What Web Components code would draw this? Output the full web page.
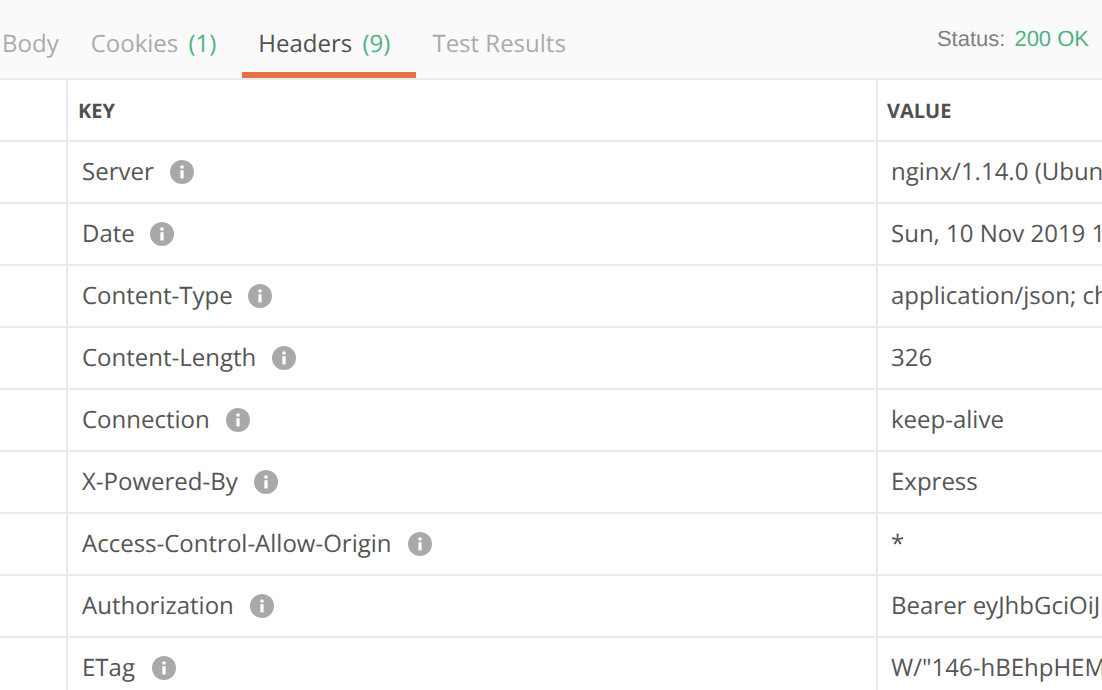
<!DOCTYPE html>
<html>
<head>
<meta charset="utf-8">
<style>
  html, body { margin: 0; padding: 0; height: 100%; overflow: hidden; background: #fff; }
  body { font-family: 'Open Sans', sans-serif; color: #505050; text-rendering: geometricPrecision; }
</style>
</head>
<body>
<response-pane>
  <response-tab slot="tabs" style="--pad-left:2px;--pad-right:15px">Body</response-tab>
  <response-tab slot="tabs" count="1" style="--pad-left:17px;--pad-right:17px;margin-right:9px">Cookies</response-tab>
  <response-tab slot="tabs" count="9" active style="--pad-left:16px;--pad-right:26px">Headers</response-tab>
  <response-tab slot="tabs" style="--pad-left:16px">Test Results</response-tab>
  <status-label slot="status" label="Status:" value="200 OK"></status-label>
  <header-row name="KEY" value="VALUE" head></header-row>
  <header-row name="Server" value="nginx/1.14.0 (Ubun" info></header-row>
  <header-row name="Date" value="Sun, 10 Nov 2019 1" info style="--gap:15px"></header-row>
  <header-row name="Content-Type" value="application/json; ch" info style="--gap:15px"></header-row>
  <header-row name="Content-Length" value="326" info></header-row>
  <header-row name="Connection" value="keep-alive" info></header-row>
  <header-row name="X-Powered-By" value="Express" info></header-row>
  <header-row name="Access-Control-Allow-Origin" value="*" info></header-row>
  <header-row name="Authorization" value="Bearer eyJhbGciOiJ" info></header-row>
  <header-row name="ETag" value='W/"146-hBEhpHEM' info style="--gap:17px"></header-row>
</response-pane>

<script>
class ResponsePane extends HTMLElement {
  constructor() {
    super();
    this.attachShadow({ mode: 'open' });
  }

  connectedCallback() {
    this.shadowRoot.innerHTML = `
      <style>
        :host { display: flex; flex-direction: column; width: 100%; height: 100vh; overflow: hidden; }
        #bar { display: flex; justify-content: space-between; height: 78px; flex: none; background: #FAFAFA; border-bottom: 2px solid #EAEAEA; }
        #tabs { display: flex; align-items: flex-end; height: 78px; }
        #rows { display: flex; flex-direction: column; }
      </style>
      <section id="bar">
        <div id="tabs"><slot name="tabs"></slot></div>
        <slot name="status"></slot>
      </section>
      <section id="rows"><slot></slot></section>
    `;
  }
}

class ResponseTab extends HTMLElement {
  constructor() {
    super();
    this.attachShadow({ mode: 'open' });
  }

  connectedCallback() {
    const count = this.getAttribute('count');
    this.shadowRoot.innerHTML = `
      <style>
        :host { display: block; color: #ABABAB; font-size: 24px; line-height: 33px; }
        :host([active]) { color: #505050; }
        #tab { padding: 0 var(--pad-right, 17px) 12px var(--pad-left, 17px); height: 33px; border-bottom: 6px solid transparent; white-space: nowrap; }
        :host([active]) #tab { border-bottom-color: #E67249; }
        #count { color: #4FB283; margin-left: 4px; }
      </style>
      <div id="tab"><slot></slot>${count ? `<span id="count"> (${count})</span>` : ''}</div>
    `;
  }
}

class StatusLabel extends HTMLElement {
  constructor() {
    super();
    this.attachShadow({ mode: 'open' });
  }

  connectedCallback() {
    this.shadowRoot.innerHTML = `
      <style>
        :host { display: block; font-family: 'Liberation Sans', Arial, sans-serif; font-size: 22px; line-height: 24px; padding: 27px 13px 0 0; white-space: nowrap; }
        #label { color: #808080; margin-right: 9px; }
        #value { color: #4FB283; }
      </style>
      <span id="label">${this.getAttribute('label')}</span><span id="value">${this.getAttribute('value')}</span>
    `;
  }
}

class HeaderRow extends HTMLElement {
  constructor() {
    super();
    this.attachShadow({ mode: 'open' });
  }

  connectedCallback() {
    const info = this.hasAttribute('info') ? `
      <svg width="24" height="24" viewBox="0 0 24 24">
        <circle cx="12" cy="12" r="12" fill="#A9A9A9"/>
        <rect x="10.4" y="5.6" width="3.2" height="3" rx=".6" fill="#fff"/>
        <rect x="10.4" y="10.2" width="3.2" height="8.2" fill="#fff"/>
      </svg>` : '';
    this.shadowRoot.innerHTML = `
      <style>
        :host { display: grid; grid-template-columns: 68px 810px 1fr; height: 60px; flex: none; border-bottom: 2px solid #EAEAEA; font-size: 24px; color: #555; }
        .cell { display: flex; align-items: center; gap: var(--gap, 16px); height: 60px; padding-left: 14px; border-right: 2px solid #EAEAEA; box-sizing: border-box; white-space: nowrap; overflow: hidden; }
        .text { padding-bottom: 2px; }
        #gutter { padding: 0; }
        #value-cell { border-right: 0; padding-left: 13px; }
        :host([head]) { color: #505050; }
        :host([head]) .cell { font-size: 20px; font-weight: 700; padding-left: 10px; }
        :host([head]) .text { padding-bottom: 0; }
        :host([head]) #gutter { padding: 0; }
        :host([head]) #value-cell { padding-left: 9px; }
        svg { flex: none; }
      </style>
      <div class="cell" id="gutter"></div>
      <div class="cell"><span class="text">${this.getAttribute('name')}</span>${info}</div>
      <div class="cell" id="value-cell"><span class="text">${this.getAttribute('value')}</span></div>
    `;
  }
}

customElements.define('response-pane', ResponsePane);
customElements.define('response-tab', ResponseTab);
customElements.define('status-label', StatusLabel);
customElements.define('header-row', HeaderRow);
</script>
</body>
</html>
